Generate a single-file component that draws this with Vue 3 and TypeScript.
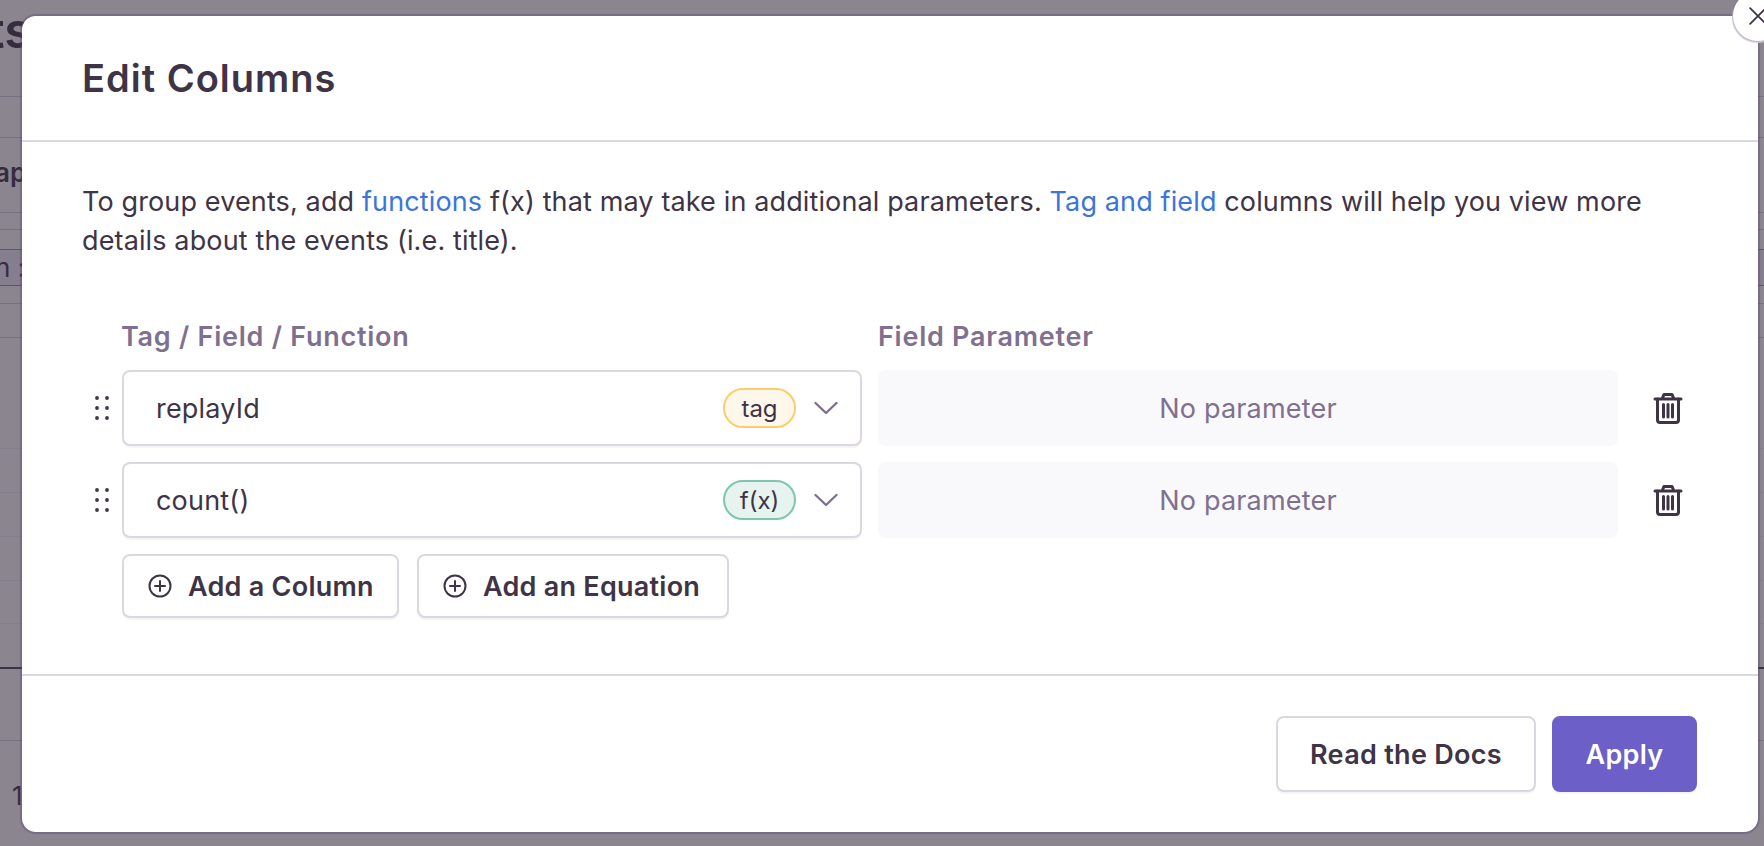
<template>
  <div class="page">
    <!-- dimmed page behind the modal, only the edges show -->
    <div class="backdrop">
      <div class="bg-title">ts</div>
      <div
        v-for="line in bgLines"
        :key="line.top"
        class="bg-line"
        :class="line.kind"
        :style="{ top: line.top + 'px' }"
      ></div>
      <div class="bg-head">ap</div>
      <div class="bg-chip">n :</div>
      <div class="bg-num">1</div>
    </div>
    <div class="overlay"></div>

    <div class="modal">
      <button class="close" type="button" aria-label="Close">
        <svg viewBox="0 0 16 16" width="18" height="18" fill="none" stroke="currentColor" stroke-width="1.6" stroke-linecap="round">
          <path d="M1 1l14 14M15 1L1 15" />
        </svg>
      </button>

      <header class="modal-header">
        <h2>Edit Columns</h2>
      </header>

      <section class="modal-body">
        <p class="intro">
          To group events, add <a>functions</a> f(x) that may take in additional parameters.
          <a>Tag and field</a> columns will help you view more<br />details about the events (i.e. title).
        </p>

        <div class="grid-head">
          <span>Tag / Field / Function</span>
          <span>Field Parameter</span>
        </div>

        <div v-for="col in columns" :key="col.name" class="row">
          <svg class="grip" viewBox="0 0 16 24" width="16" height="24" fill="currentColor">
            <circle v-for="d in gripDots" :key="d[0] + '-' + d[1]" :cx="d[0]" :cy="d[1]" r="1.9" />
          </svg>
          <div class="select">
            <span class="select-value">{{ col.name }}</span>
            <span class="tag" :class="col.kind">{{ col.label }}</span>
            <svg class="chevron" viewBox="0 0 24 14" width="24" height="14" fill="none" stroke="currentColor" stroke-width="2.4" stroke-linecap="round" stroke-linejoin="round">
              <path d="M1.5 2l10.500 10L22.500 2" />
            </svg>
          </div>
          <div class="param">No parameter</div>
          <svg class="trash" viewBox="0 0 30 32" width="30" height="32" fill="none" stroke="currentColor" stroke-width="3" stroke-linecap="round" stroke-linejoin="round">
            <path d="M2 7h26" />
            <path d="M9.500 6l1.500-3.600h8L20.500 6" />
            <path d="M4.500 7v21a2.500 2.500 0 0 0 2.500 2.500h16a2.500 2.500 0 0 0 2.500-2.500V7" />
            <path d="M10.500 12.500v12.500M15 12.500v12.500M19.500 12.500v12.500" />
          </svg>
        </div>

        <div class="add-row">
          <button v-for="label in addButtons" :key="label" class="btn add" type="button">
            <svg viewBox="0 0 24 24" width="24" height="24" fill="none" stroke="currentColor" stroke-width="2" stroke-linecap="round">
              <circle cx="12" cy="12" r="10.500" />
              <path d="M12 7v10M7 12h10" />
            </svg>
            {{ label }}
          </button>
        </div>
      </section>

      <footer class="modal-footer">
        <button class="btn docs" type="button">Read the Docs</button>
        <button class="btn primary" type="button">Apply</button>
      </footer>
    </div>
  </div>
</template>

<script setup lang="ts">
interface Column {
  name: string;
  kind: "is-tag" | "is-fn";
  label: string;
}

interface BgLine {
  top: number;
  kind: string;
}

const columns: Column[] = [
  { name: "replayId", kind: "is-tag", label: "tag" },
  { name: "count()", kind: "is-fn", label: "f(x)" },
];

const addButtons = ["Add a Column", "Add an Equation"];

const gripDots = [
  [3, 2], [13, 2],
  [3, 12], [13, 12],
  [3, 22], [13, 22],
];

const bgLines: BgLine[] = [
  { top: 96, kind: "" },
  { top: 137, kind: "" },
  { top: 212, kind: "" },
  { top: 229, kind: "" },
  { top: 303, kind: "" },
  { top: 337, kind: "" },
  { top: 448, kind: "faint" },
  { top: 492, kind: "faint" },
  { top: 536, kind: "faint" },
  { top: 580, kind: "faint" },
  { top: 623, kind: "faint" },
  { top: 667, kind: "strong" },
  { top: 740, kind: "" },
];
</script>

<style>
html,
body {
  margin: 0;
  overflow: hidden;
}
</style>

<style scoped>
.page {
  position: relative;
  width: 1764px;
  height: 846px;
  overflow: hidden;
  background: #fff;
  font-family: Inter, "Noto Sans", sans-serif;
  color: #3e3446;
}

/* Backdrop */
.backdrop {
  position: absolute;
  inset: 0;
  color: #2b2233;
  font-weight: 600;
}

.bg-line {
  position: absolute;
  left: 0;
  right: 0;
  height: 1px;
  background: #cfc8d6;
}

.bg-line.faint {
  background: #f1eff4;
}

.bg-line.strong {
  height: 2px;
  background: #3e3446;
}

.bg-title {
  position: absolute;
  left: -13px;
  top: 0;
  font-size: 50px;
  line-height: 60px;
}

.bg-head {
  position: absolute;
  left: -5px;
  top: 157px;
  font-size: 26px;
  line-height: 32px;
}

.bg-chip {
  position: absolute;
  left: 0;
  right: 0;
  top: 249px;
  height: 37px;
  box-sizing: border-box;
  line-height: 35px;
  text-indent: -5px;
  font-size: 26px;
  font-weight: 400;
  background: #f0eefa;
  border-top: 1px solid #6c8fe0;
  border-bottom: 1px solid #6c8fe0;
}

.bg-num {
  position: absolute;
  left: 12px;
  top: 780px;
  font-size: 26px;
  line-height: 32px;
  font-weight: 400;
}

.overlay {
  position: absolute;
  inset: 0;
  background: rgba(62, 52, 70, 0.6);
}

/* Modal */
.modal {
  position: absolute;
  left: 22px;
  top: 16px;
  width: 1736px;
  height: 816px;
  display: flex;
  flex-direction: column;
  background: #fff;
  border-radius: 14px;
  box-shadow: 0 0 1px 2px rgba(90, 70, 115, 0.4);
}

.close {
  position: absolute;
  right: -25px;
  top: -25px;
  width: 50px;
  height: 50px;
  padding: 0;
  display: flex;
  align-items: center;
  justify-content: center;
  color: #3e3446;
  background: #fff;
  border: 0;
  border-radius: 50%;
  box-shadow: 0 0 0 1px rgba(62, 52, 70, 0.12), -1px 2px 1px #d3cddb;
}

.modal-header {
  flex: none;
  height: 126px;
  padding: 0 60px;
  display: flex;
  align-items: center;
  box-sizing: border-box;
  border-bottom: 2px solid #dbd6e1;
}

.modal-header h2 {
  margin: 0;
  font-size: 38px;
  font-weight: 600;
  letter-spacing: 1px;
  line-height: 1;
}

.modal-body {
  flex: 1;
  padding: 40px 61px 0;
}

.intro {
  margin: 0 0 61px -1px;
  font-size: 27px;
  letter-spacing: 0.13px;
  line-height: 39px;
}

.intro a {
  color: #3d74db;
}

.grid-head {
  display: grid;
  grid-template-columns: 757px 1fr;
  padding-left: 38px;
  margin-bottom: 17px;
  font-size: 27px;
  font-weight: 600;
  letter-spacing: 0.75px;
  line-height: 32px;
  color: #80708f;
}

.row {
  display: flex;
  align-items: center;
  height: 76px;
  margin-bottom: 16px;
}

.grip {
  flex: none;
  margin: 0 12px 0 11px;
  color: #3e3446;
}

.select {
  flex: none;
  box-sizing: border-box;
  width: 740px;
  height: 76px;
  padding: 0 22px 0 32px;
  display: flex;
  align-items: center;
  border: 2px solid #dbd6e1;
  border-radius: 8px;
  box-shadow: 0 2px 1px rgba(62, 52, 70, 0.05);
  font-size: 27px;
}

.select-value {
  flex: 1;
  letter-spacing: 0.2px;
}

.tag {
  box-sizing: border-box;
  width: 73px;
  height: 40px;
  margin-right: 18px;
  display: flex;
  align-items: center;
  justify-content: center;
  border: 2px solid;
  border-radius: 20px;
  font-size: 24px;
}

.tag.is-tag {
  background: #fff8ea;
  border-color: #fbce6b;
}

.tag.is-fn {
  background: #e6f3ef;
  border-color: #7dc6b0;
}

.chevron {
  flex: none;
  color: #80708f;
}

.param {
  flex: none;
  width: 740px;
  height: 76px;
  margin-left: 16px;
  display: flex;
  align-items: center;
  justify-content: center;
  background: #f9f8fb;
  border-radius: 8px;
  font-size: 27px;
  letter-spacing: 0.2px;
  color: #80708f;
}

.trash {
  flex: none;
  margin-left: 35px;
  color: #3e3446;
}

.add-row {
  display: grid;
  grid-template-columns: 277px 312px;
  gap: 18px;
  padding-left: 39px;
}

.btn {
  box-sizing: border-box;
  display: inline-flex;
  align-items: center;
  justify-content: center;
  font-family: inherit;
  font-weight: 600;
  white-space: nowrap;
  color: #3e3446;
  background: #fff;
  border: 2px solid #dbd6e1;
  border-radius: 8px;
  box-shadow: 0 2px 1px rgba(62, 52, 70, 0.05);
}

.add {
  height: 64px;
  padding: 0 0 0 24px;
  gap: 16px;
  justify-content: flex-start;
  font-size: 27px;
  letter-spacing: 0.25px;
}

.modal-footer {
  flex: none;
  height: 158px;
  box-sizing: border-box;
  padding: 40px 61px 0 0;
  display: flex;
  justify-content: flex-end;
  gap: 16px;
  border-top: 2px solid #dbd6e1;
}

.docs,
.primary {
  height: 76px;
  font-size: 27px;
  letter-spacing: 0.3px;
}

.docs {
  width: 260px;
}

.primary {
  width: 145px;
  color: #fff;
  background: #6c5fc7;
  border-color: #6c5fc7;
}
</style>
